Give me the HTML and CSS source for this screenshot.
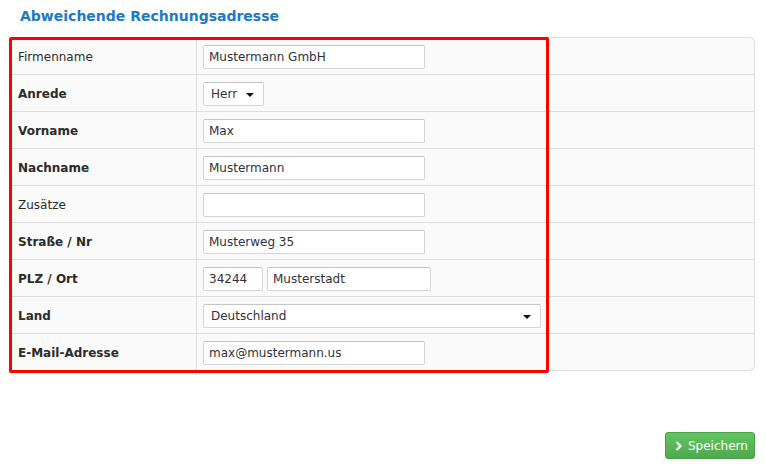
FILE: index.html
```html
<!DOCTYPE html>
<html lang="de">
<head>
    <meta charset="UTF-8">
    <title>Abweichende Rechnungsadresse</title>
    <link rel="stylesheet" href="styles.css">
</head>
<body>

    <h2 class="section-title">Abweichende Rechnungsadresse</h2>

    <div class="form-wrap">
        <div class="form-table">
            <div class="row">
                <div class="label">Firmenname</div>
                <div class="field"><div class="input w-std">Mustermann GmbH</div></div>
            </div>
            <div class="row">
                <div class="label required">Anrede</div>
                <div class="field">
                    <div class="select w-salut">Herr<span class="caret"></span></div>
                </div>
            </div>
            <div class="row">
                <div class="label required">Vorname</div>
                <div class="field"><div class="input w-std">Max</div></div>
            </div>
            <div class="row">
                <div class="label required">Nachname</div>
                <div class="field"><div class="input w-std">Mustermann</div></div>
            </div>
            <div class="row">
                <div class="label">Zusätze</div>
                <div class="field"><div class="input w-std"></div></div>
            </div>
            <div class="row">
                <div class="label required">Straße / Nr</div>
                <div class="field"><div class="input w-std">Musterweg 35</div></div>
            </div>
            <div class="row">
                <div class="label required">PLZ / Ort</div>
                <div class="field">
                    <div class="input w-zip">34244</div>
                    <div class="input w-city">Musterstadt</div>
                </div>
            </div>
            <div class="row">
                <div class="label required">Land</div>
                <div class="field">
                    <div class="select w-country">Deutschland<span class="caret"></span></div>
                </div>
            </div>
            <div class="row last">
                <div class="label required">E-Mail-Adresse</div>
                <div class="field"><div class="input w-std">max@mustermann.us</div></div>
            </div>
        </div>

        <!-- Markierung der Pflichtangaben -->
        <div class="highlight"></div>
    </div>

    <div class="actions">
        <button class="btn-save">
            <svg width="8" height="10" viewBox="0 0 8 10"><path d="M1.5 1 L5.5 5 L1.5 9" fill="none" stroke="#fff" stroke-width="2.2"/></svg>
            Speichern
        </button>
    </div>

</body>
</html>
```

FILE: styles.css
```css
body {
    margin: 0;
    background: #fff;
    font-family: "DejaVu Sans", Verdana, sans-serif;
    font-size: 12px;
    color: #333;
}
.section-title {
    margin: 0 0 12px;
    padding: 7px 20px 0;
    font-size: 14px;
    line-height: 18px;
    font-weight: bold;
    color: #1a7ac4;
}
.form-wrap {
    position: relative;
    margin-left: 10px;
    width: 745px;
}
.form-table {
    background: #fafafa;
    border: 1px solid #ddd;
    border-left: none;
    border-radius: 0 6px 6px 0;
}
.row {
    display: flex;
    height: 36px;
    border-bottom: 1px solid #ddd;
}
.row.last {
    border-bottom: none;
}
.label {
    width: 178px;
    padding: 2px 0 0 8px;
    border-right: 1px solid #ddd;
    display: flex;
    align-items: center;
    color: #2b2b2b;
}
.label.required {
    font-weight: bold;
}
.field {
    display: flex;
    align-items: center;
    gap: 4px;
    padding: 1px 0 0 6px;
}
.input, .select {
    box-sizing: border-box;
    height: 24px;
    line-height: 23px;
    background: #fff;
    border: 1px solid #d5d5d5;
    border-top-color: #c4c4c4;
    border-radius: 2px;
    padding: 0 5px;
    color: #2f3140;
    white-space: nowrap;
}
.select {
    position: relative;
    padding-left: 7px;
}
.caret {
    position: absolute;
    right: 9px;
    top: 10px;
    border-left: 4px solid transparent;
    border-right: 4px solid transparent;
    border-top: 4px solid #111;
}
.w-std { width: 222px; }
.w-salut { width: 61px; }
.w-zip { width: 60px; }
.w-city { width: 164px; }
.w-country { width: 338px; }
.highlight {
    position: absolute;
    left: -1px;
    top: 0;
    width: 540px;
    height: 336px;
    box-sizing: border-box;
    border: 3px solid #f00;
    border-radius: 2px;
}
.actions {
    display: flex;
    justify-content: flex-end;
    width: 755px;
    margin-top: 61px;
}
.btn-save {
    display: flex;
    align-items: center;
    gap: 5px;
    height: 27px;
    width: 90px;
    padding: 0 0 0 9px;
    border: 1px solid #4a9e4a;
    border-radius: 3px;
    background: linear-gradient(#62c462, #4fa94f);
    color: #fff;
    font-family: "DejaVu Sans", Verdana, sans-serif;
    font-size: 12px;
    cursor: pointer;
}
```
